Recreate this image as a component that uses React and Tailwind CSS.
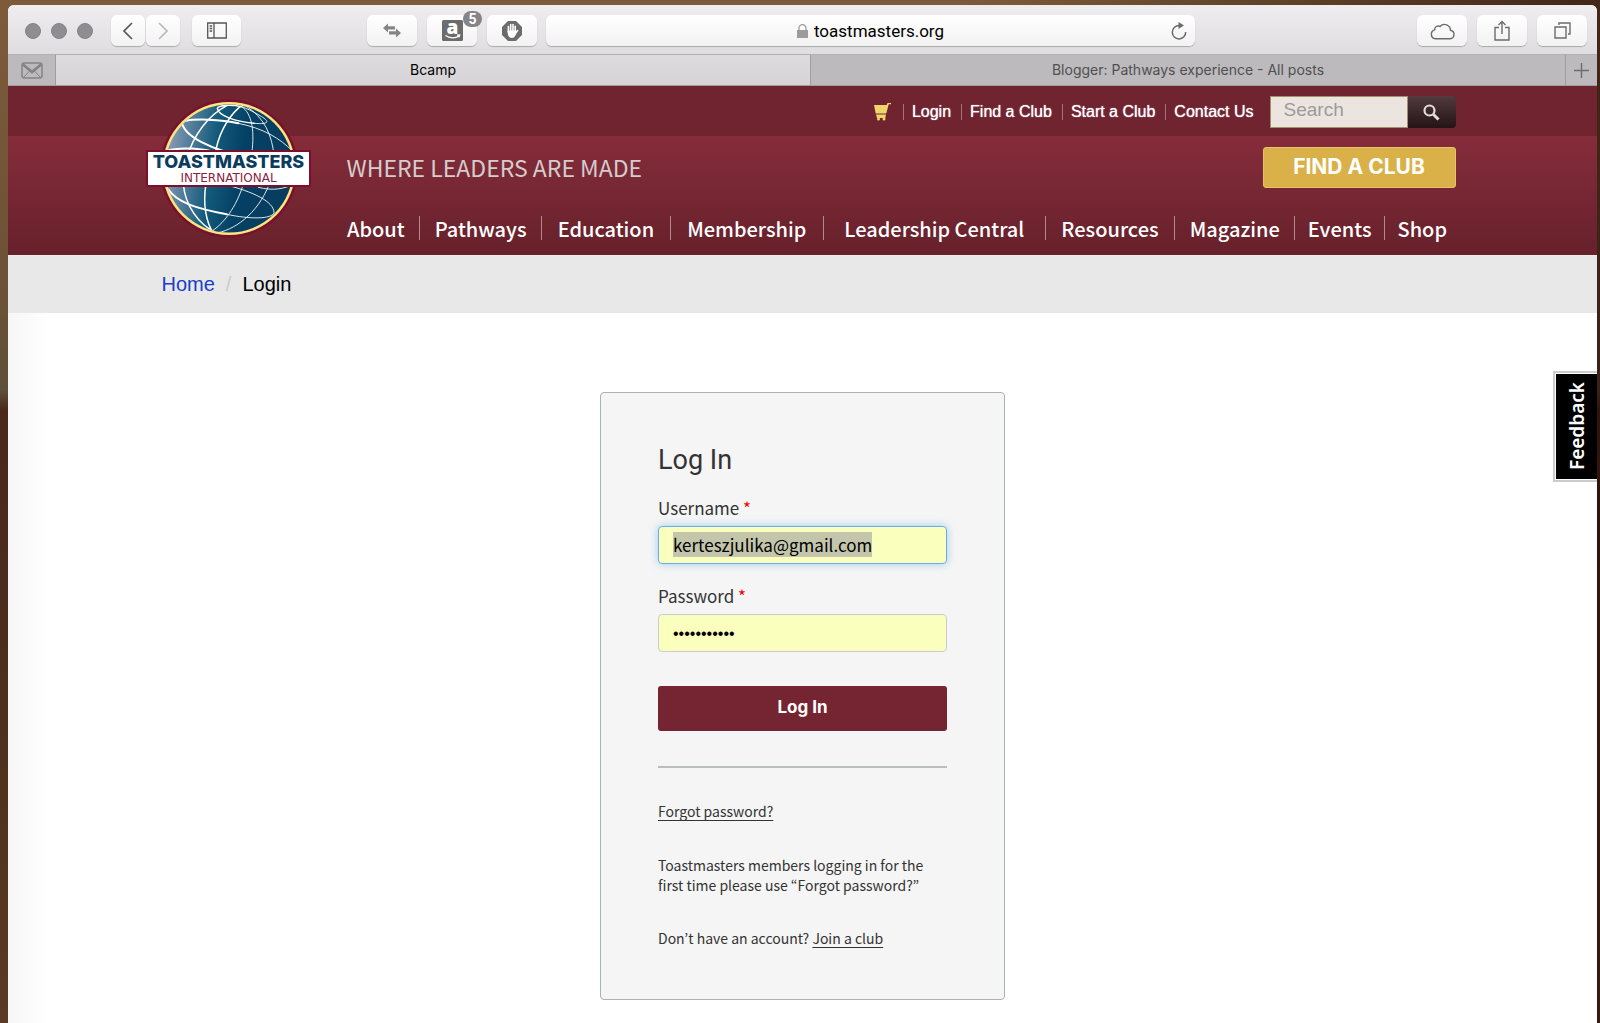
import React, { useEffect, useRef } from "react";

const toolButton =
  "flex h-[31px] items-center justify-center rounded-md bg-gradient-to-b from-white to-[#f3f2f3] text-[#6b6b6b] shadow-[0_1px_1px_rgba(0,0,0,0.25)]";

function Toolbar() {
  return (
    <div className="flex h-[49px] items-center bg-gradient-to-b from-[#efedef] to-[#dfdddf] pt-[2px] pr-[10px] pl-[17px]">
      <div className="flex shrink-0 gap-[10px]">
        <span className="h-4 w-4 rounded-full border border-[#838287] bg-[#8e8d92]" />
        <span className="h-4 w-4 rounded-full border border-[#838287] bg-[#8e8d92]" />
        <span className="h-4 w-4 rounded-full border border-[#838287] bg-[#8e8d92]" />
      </div>
      <div className="ml-[18px] flex shrink-0 gap-px">
        <button aria-label="Back" className={`${toolButton} w-[34px]`}>
          <svg width="12" height="18" viewBox="0 0 12 18" fill="none" stroke="#555" strokeWidth="1.7"><path d="M10 1L2 9l8 8" /></svg>
        </button>
        <button aria-label="Forward" className={`${toolButton} w-[34px]`}>
          <svg width="12" height="18" viewBox="0 0 12 18" fill="none" stroke="#b9b9b9" strokeWidth="1.7"><path d="M2 1l8 8-8 8" /></svg>
        </button>
      </div>
      <button aria-label="Sidebar" className={`${toolButton} ml-3 w-[49px] shrink-0`}>
        <svg width="20" height="17" viewBox="0 0 20 17" fill="none" stroke="#555" strokeWidth="1.3"><path d="M.7 1h18.6v15H.7zM7 1v15M2.6 4h2.6M2.6 6.5h2.6M2.6 9h2.6" /></svg>
      </button>
      <div className="ml-[126px] flex shrink-0 gap-[10px]">
        <button aria-label="Switch" className={`${toolButton} w-[50px]`}>
          <svg width="18" height="15" viewBox="0 0 18 15" fill="#858585"><path d="M0 5L5 .5V3.300H12V6.500H5V9.500zM18 10l-5-4.500V8.300H6v3.200h7v3z" /></svg>
        </button>
        <button aria-label="Amazon, 5" className={`${toolButton} relative w-[50px]`}>
          <svg width="21" height="21" viewBox="0 0 21 21" className="overflow-visible">
            <rect width="21" height="21" rx="1.500" fill="#6c6c6c" />
            <text x="10.500" y="13.500" textAnchor="middle" fontFamily="Open Sans, sans-serif" fontWeight="800" fontSize="19" fill="#fff">a</text>
            <path d="M3.500 15.500c4 3 10 3 13.500 .500M15 15.200l2.700-.2-.7 2.300" fill="none" stroke="#fff" strokeWidth="1.200" />
          </svg>
          <span className="absolute -top-1 -right-[5px] flex h-4 w-[19px] items-center justify-center rounded-full bg-[#858489] font-['Roboto',sans-serif] text-sm leading-4 font-bold text-white">5</span>
        </button>
        <button aria-label="Block" className={`${toolButton} w-[50px]`}>
          <svg width="20" height="20" viewBox="0 0 20 20">
            <path d="M6 0h8l6 6v8l-6 6H6l-6-6V6z" fill="#6c6c6c" />
            <path d="M6.400 11V5.500M8.700 10V3.600M11 10V3.600M13.200 11V5.200M12.500 14l3-4.500" fill="none" stroke="#fff" strokeWidth="1.600" strokeLinecap="round" />
            <path d="M5.600 9.500h8.400v3l-1 2.500c-1 2.500-5 2.500-6.300.300-.8-1.300-1.100-3-1.100-5.800z" fill="#fff" />
          </svg>
        </button>
      </div>
      <div className="ml-[9px] flex h-[31px] min-w-0 flex-1 items-center rounded-md bg-gradient-to-b from-white to-[#f3f2f3] pr-2 shadow-[0_1px_1px_rgba(0,0,0,0.25)]">
        <div className="flex flex-1 items-center justify-center gap-[6px] pl-6 font-['Roboto',sans-serif] text-[17px] leading-5 text-black">
          <svg width="11" height="14" viewBox="0 0 11 14"><rect y="6" width="11" height="8" fill="#9c9c9c" /><path d="M2 7V4a3.500 3.300 0 0 1 7 0v3" fill="none" stroke="#9c9c9c" strokeWidth="1.300" /></svg>
          <span className="pt-px">toastmasters.org</span>
        </div>
        <button aria-label="Reload">
          <svg width="16" height="18" viewBox="0 0 16 18" fill="none" stroke="#6b6b6b" strokeWidth="1.500"><path d="M9 3.500H8A6.700 6.700 0 1 0 14.700 10" /><path d="M7.500 0l5.500 3.500L7.500 7z" fill="#6b6b6b" stroke="none" /></svg>
        </button>
      </div>
      <div className="ml-[222px] flex shrink-0 gap-[10px]">
        <button aria-label="iCloud tabs" className={`${toolButton} w-[50px]`}>
          <svg width="25" height="18" viewBox="0 0 25 18" fill="none" stroke="#6b6b6b" strokeWidth="1.400"><path d="M5.500 16.800h14.500a4.300 4.300 0 0 0 .5-8.500A6 6 0 0 0 10 4.500a3.500 3.500 0 0 0-5.300 3.300A4.600 4.600 0 0 0 5.500 16.800z" /></svg>
        </button>
        <button aria-label="Share" className={`${toolButton} w-[50px]`}>
          <svg width="16" height="21" viewBox="0 0 16 21" fill="none" stroke="#6b6b6b" strokeWidth="1.400"><path d="M5 7.500H1V20h14V7.500h-4M8 14V1.500M4.500 5L8 1.500 11.500 5" /></svg>
        </button>
        <button aria-label="Show all tabs" className={`${toolButton} w-[50px]`}>
          <svg width="17" height="17" viewBox="0 0 17 17" fill="none" stroke="#6b6b6b" strokeWidth="1.400"><path d="M1 5h11v11H1zM5 3V1h11v11h-2" /></svg>
        </button>
      </div>
    </div>
  );
}

function TabBar() {
  return (
    <div className="flex h-8 border-t border-b border-t-[#b3b1b4] border-b-[#a09da0] bg-[#bcbabc] font-['Inter',sans-serif] text-sm">
      <button aria-label="Pinned mail tab" className="flex w-12 items-center justify-center border-r border-[#9f9da0]">
        <svg width="22" height="17" viewBox="0 0 22 17" fill="none" stroke="#838286"><rect x="1" y="1" width="20" height="15" rx="2.500" strokeWidth="1.500" /><path d="M2 2.500l9 7.500 9-7.500" strokeWidth="2.500" /><path d="M3 15l5.500-6M19 15l-5.500-6" /></svg>
      </button>
      <button className="flex-1 bg-gradient-to-b from-[#dddbdd] to-[#d6d4d6] text-black">Bcamp</button>
      <button className="flex-1 border-r border-l border-[#9f9da0] text-[#505050]">Blogger: Pathways experience - All posts</button>
      <button aria-label="New tab" className="flex w-[31px] items-center justify-center">
        <svg width="15" height="15" viewBox="0 0 15 15" stroke="#6d6c6f" strokeWidth="1.400"><path d="M7.500 0v15M0 7.500h15" /></svg>
      </button>
    </div>
  );
}

function Logo() {
  return (
    <svg className="h-[136px] w-[165px] overflow-visible" viewBox="0 0 165 136" role="img" aria-label="Toastmasters International">
      <defs>
        <linearGradient id="globe" x1="0" y1="0.2" x2="1" y2="0.35">
          <stop offset="0.05" stopColor="#8499b3" />
          <stop offset="0.4" stopColor="#135a7b" />
          <stop offset="0.62" stopColor="#044165" />
          <stop offset="1" stopColor="#083c5e" />
        </linearGradient>
        <clipPath id="globe-edge"><circle cx="83" cy="67.500" r="64" /></clipPath>
      </defs>
      <circle cx="83" cy="67.500" r="69" fill="#7b0f2c" />
      <circle cx="83" cy="67.500" r="66.500" fill="#fbe580" />
      <circle cx="83" cy="67.500" r="64" fill="url(#globe)" />
      <g clipPath="url(#globe-edge)">
        <g transform="translate(-16 -21) scale(.3333)" fill="none" stroke="#fff" strokeLinecap="round">
          <path strokeWidth="6" d="M155 124C160 170 250 212 345 228M165 123C190 117 270 116 325 130M108 213C150 199 220 205 275 222M115 328C140 368 200 385 290 403" />
          <path strokeWidth="4.500" d="M292 76C235 105 190 165 170 235M330 80C290 115 262 170 255 228M160 312C165 375 205 435 262 460M228 312C218 370 228 430 252 462M335 80C300 72 262 76 262 86C265 105 310 124 372 130" />
          <path strokeWidth="2.600" d="M325 130C400 145 450 175 486 212M335 80C368 100 375 160 364 230M350 80C400 110 428 165 432 230M372 130C420 134 418 124 395 110C375 97 350 85 335 80M340 312C320 380 280 435 238 458M418 312C382 405 310 452 255 460M290 403C360 418 425 418 432 398C432 365 370 335 285 314M385 322C430 334 465 326 492 312M160 235C190 222 250 205 300 228" />
        </g>
      </g>
      <rect x="0" y="49" width="165" height="37" fill="#7b0f2c" />
      <rect x="2" y="51" width="161" height="33" fill="#fff" />
      <text x="82.500" y="67" textAnchor="middle" fontFamily="Inter, sans-serif" fontWeight="800" fontSize="18" fill="#0b3c5e">TOASTMASTERS</text>
      <text x="82.500" y="81" textAnchor="middle" fontFamily="DejaVu Sans, sans-serif" fontSize="12" fill="#8a2340">INTERNATIONAL</text>
    </svg>
  );
}

const navItems = [
  ["About", "pr-[14px]"],
  ["Pathways", "px-[14px]"],
  ["Education", "px-[15px]"],
  ["Membership", "px-4"],
  ["Leadership Central", "px-5"],
  ["Resources", "px-[15px]"],
  ["Magazine", "px-[14px]"],
  ["Events", "px-3"],
  ["Shop", "pl-3"],
];

const utilityLink = "mr-[10px] border-l border-[#a5737b] pl-2 leading-4";

function Header() {
  return (
    <header className="bg-[linear-gradient(to_bottom,#702430_0,#702430_50px,#862c3b_50px,#66212b_100%)] pr-1">
      <div className="mx-auto flex h-[169px] max-w-[1310px]">
        <a href="#home" className="mt-[15px] shrink-0"><Logo /></a>
        <div className="ml-9 flex min-w-0 flex-1 flex-col">
          <div className="flex h-[50px] items-center justify-end pt-[2px] font-['Liberation_Sans',Arial,sans-serif] text-base text-white [text-shadow:0_0_1px_rgba(255,255,255,0.9)]">
            <a href="#cart" aria-label="Cart" className="mr-3">
              <svg width="17" height="18" viewBox="0 0 17 18"><path d="M0 2h12.700L13.500 0H17v1.300h-2.300L12.300 10.500H1.700zM2 11.500h10l-.7 3.500H3z" fill="#f0d56d" /><circle cx="4.500" cy="16" r="1.500" fill="#f0d56d" /><circle cx="10" cy="16" r="1.500" fill="#f0d56d" /></svg>
            </a>
            <a href="#login" className={utilityLink}>Login</a>
            <a href="#find" className={utilityLink}>Find a Club</a>
            <a href="#start" className={utilityLink}>Start a Club</a>
            <a href="#contact" className={utilityLink}>Contact Us</a>
            <input aria-label="Search" placeholder="Search" className="ml-[6px] h-8 w-[138px] border border-[#a0906b] bg-[#ece5df] px-[13px] pb-1 text-[19px] text-black placeholder:text-[#9b9b9b]" />
            <button aria-label="Submit search" className="flex h-8 w-12 items-center justify-center rounded-r bg-gradient-to-b from-[#523a3e] to-[#251416]">
              <svg width="17" height="17" viewBox="0 0 17 17" fill="none" stroke="#e2dcda"><circle cx="6.500" cy="6.500" r="5" strokeWidth="2.200" /><path d="M10.500 10.500l5 5" strokeWidth="3" /></svg>
            </button>
          </div>
          <div className="mt-[11px] flex h-[41px] items-center justify-between">
            <p className="pb-px font-['Noto_Sans_CJK_KR',sans-serif] text-[23px] leading-8 text-[#d5cccd]">WHERE LEADERS ARE MADE</p>
            <button className="h-[41px] w-[193px] rounded-[3px] border border-[#e6c36b] bg-[#dab149] pb-px font-['Inter',sans-serif] text-[21px] font-bold text-white">FIND A CLUB</button>
          </div>
          <nav className="mt-[28px] flex h-6 justify-between pr-2 font-['Noto_Sans_CJK_KR',sans-serif] text-xl font-medium whitespace-nowrap text-white">
            {navItems.map(([label, pad], i) => (
              <a key={label} href="#nav" className={`${pad} ${i ? "border-l border-[#b08a90]" : ""} flex-auto text-center leading-[26px]`}>{label}</a>
            ))}
          </nav>
        </div>
      </div>
    </header>
  );
}

const fieldClass =
  "mt-1 block h-[38px] w-full rounded border bg-[#faffbd] px-[14px] text-black outline-none selection:bg-[#c4c6ac] selection:text-black";

function LoginCard() {
  const userRef = useRef(null);
  useEffect(() => {
    userRef.current.focus();
    userRef.current.select();
  }, []);
  return (
    <form className="mx-auto mt-[79px] w-[405px] rounded border border-[#a9b4b1] bg-[#f5f5f5] px-[57px] pt-[51px] pb-[51px] font-['Noto_Sans_CJK_KR',sans-serif] text-[#333]">
      <h1 className="font-['Roboto',sans-serif] text-[27px] leading-8">Log In</h1>
      <label htmlFor="user" className="mt-[18px] block text-[17px] leading-7">Username <span className="text-[#f00]">*</span></label>
      <input id="user" ref={userRef} defaultValue="kerteszjulika@gmail.com" className={`${fieldClass} border-[#66afe9] pb-[2px] text-[17px] shadow-[0_0_8px_rgba(102,175,233,0.6)]`} />
      <label htmlFor="pass" className="mt-[18px] block text-[17px] leading-7">Password <span className="text-[#f00]">*</span></label>
      <input id="pass" type="password" defaultValue="abcdefghijk" className={`${fieldClass} border-[#ccc] pt-[2px] font-['Liberation_Sans',Arial,sans-serif] text-base`} />
      <button type="button" className="mt-[34px] block h-[45px] w-full rounded-[3px] bg-[#752431] pb-px font-['Inter',sans-serif] text-[17px] font-bold text-white">Log In</button>
      <hr className="mt-[35px] border-t-2 border-[#b8bfbd]" />
      <div className="mt-[33px] text-sm leading-5">
        <p><a href="#forgot" className="underline underline-offset-3">Forgot password?</a></p>
        <p className="mt-[34px]">Toastmasters members logging in for the first time please use “Forgot password?”</p>
        <p className="mt-[33px]">Don’t have an account? <a href="#join" className="underline underline-offset-3">Join a club</a></p>
      </div>
    </form>
  );
}

export default function App() {
  return (
    <div className="flex min-h-screen flex-col bg-[linear-gradient(to_right,transparent_60%,rgba(35,10,5,0.65)_100%),linear-gradient(to_bottom,#7d5b3a_0,#6b5137_300px,#5f4f39_390px,#4a281c_410px,#4d2f1d_700px,#5a3a26_100%)] pt-[5px] pr-[3px] pl-2">
      <div className="relative flex flex-1 flex-col overflow-hidden rounded-t-md bg-white">
        <Toolbar />
        <TabBar />
        <Header />
        <nav aria-label="Breadcrumb" className="border-t border-[#f4eaea] bg-[#e8e8e8] font-['Liberation_Sans',Arial,sans-serif] text-xl">
          <div className="mx-auto flex h-[57px] max-w-[1310px] items-center gap-[11px] px-[14px] pb-[2px]">
            <a href="#home" className="text-[#1a3ec8]">Home</a>
            <span className="text-[#ccc]">/</span>
            <span className="text-black">Login</span>
          </div>
        </nav>
        <main className="flex-1 bg-[linear-gradient(to_right,#f6f6f6,#fff_40px)] pb-[23px]">
          <LoginCard />
        </main>
        <button className="absolute top-[366px] right-0 flex h-[111px] w-[44px] items-center justify-center border-y-2 border-l-2 border-[#ccc] bg-black pl-[3px] font-['Noto_Sans',sans-serif] text-[19px] font-semibold text-white shadow-[inset_1px_1px_0_#fff,inset_0_-1px_0_#fff]">
          <span className="rotate-180 [writing-mode:vertical-rl]">Feedback</span>
        </button>
      </div>
    </div>
  );
}
